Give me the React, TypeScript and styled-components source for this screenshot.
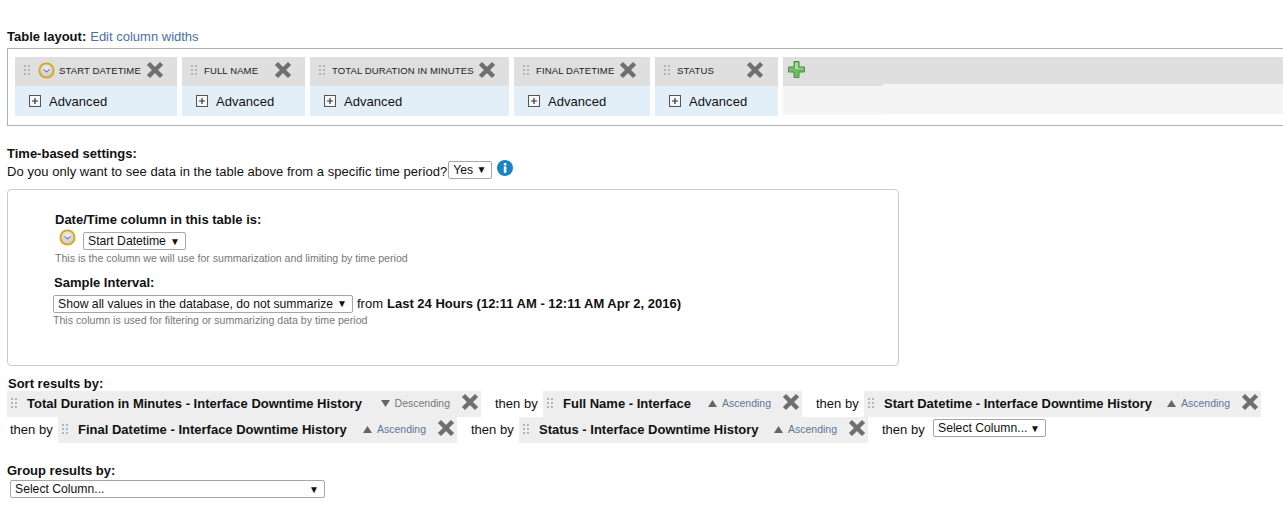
import React from 'react';
import styled, { createGlobalStyle } from 'styled-components';

const GlobalStyle = createGlobalStyle`
    html, body {
        margin: 0;
        padding: 0;
        background: #fff;
        overflow: hidden;
    }
    body {
        font-family: "Liberation Sans", Arial, sans-serif;
        font-size: 13px;
        color: #111;
    }
`

const Page = styled.div`
    width: 1283px;
    height: 511px;
    overflow: hidden;
    padding: 29px 0 0 7px;
    box-sizing: border-box;
`

const Heading = styled.div`
    font-size: 13px;
    font-weight: bold;
    line-height: 15px;
`

const EditLink = styled.a`
    font-weight: normal;
    color: #4a6f9f;
    margin-left: 4px;
`

// Table layout
const LayoutBox = styled.div`
    width: 1290px;
    height: 78px;
    margin-top: 4px;
    padding: 8px 0 0 7px;
    box-sizing: border-box;
    border: 1px solid #b0b0b0;
    display: flex;
    gap: 5px;
`

const ColumnCard = styled.div<{ $width: number }>`
    width: ${(props) => props.$width}px;
    flex: none;
    display: flex;
    flex-direction: column;
`

const ColumnHead = styled.div`
    height: 29px;
    box-sizing: border-box;
    background: #dfdfdf;
    display: flex;
    align-items: center;
    padding: 0 0 3px 9px;
    position: relative;
`

const ClockSlot = styled.span`
    display: flex;
    margin: 0 -3px 0 8px;
`

const ColumnName = styled.span`
    font-size: 9.5px;
    letter-spacing: 0.13px;
    color: #222;
    margin-left: 7px;
    white-space: nowrap;
`

const RemoveSlot = styled.span<{ $right: number }>`
    position: absolute;
    top: 4px;
    right: ${(props) => props.$right}px;
    display: flex;
`

const ColumnBody = styled.div`
    height: 30px;
    background: #e3eff8;
    display: flex;
    align-items: center;
    padding-left: 14px;
    gap: 8px;
    font-size: 13px;
    letter-spacing: 0.05px;
`

const AddColumn = styled.div`
    flex: 1;
    display: flex;
    flex-direction: column;
`

const AddHead = styled.div`
    height: 27px;
    background: #dfdfdf;
    padding: 4px 0 0 5px;
    box-sizing: border-box;
`

const AddFoot = styled.div`
    display: flex;
    height: 31px;
`

const AddFootLeft = styled.div`
    width: 100px;
    height: 31px;
    box-sizing: border-box;
    background: #f4f4f4;
    border-top: 2px solid #dfdfdf;
`

const AddFootRight = styled.div`
    flex: 1;
    height: 30px;
    background: #f4f4f4;
`

// Time-based settings
const TimeSection = styled.div`
    margin-top: 20px;
`

const Question = styled.div`
    font-size: 13px;
    letter-spacing: 0.05px;
    line-height: 18px;
    margin-top: 2px;
    display: flex;
    align-items: flex-start;
`

const QuestionSelect = styled.span`
    margin: -2px 0 0 1px;
    display: flex;
`

const FakeSelect = styled.span<{ $width: number }>`
    width: ${(props) => props.$width}px;
    height: 18px;
    flex: none;
    box-sizing: border-box;
    display: inline-flex;
    align-items: center;
    justify-content: space-between;
    padding: 0 5px 0 4px;
    background: #fff;
    border: 1px solid #a6a6a6;
    border-radius: 2px;
    font-size: 12.2px;
    letter-spacing: 0;
    color: #111;
    white-space: nowrap;
`

const Arrow = styled.span`
    font-size: 10px;
    color: #111;
`

const InfoSlot = styled.span`
    margin: -3px 0 0 5px;
    display: flex;
`

const Panel = styled.div`
    width: 892px;
    height: 177px;
    margin-top: 8px;
    box-sizing: border-box;
    border: 1px solid #ccc;
    border-radius: 4px;
    padding: 22px 0 0 46px;
`

const PanelLabel = styled.div`
    font-size: 13px;
    font-weight: bold;
    line-height: 15px;
    margin-left: 1px;
`

const DateRow = styled.div`
    display: flex;
    align-items: flex-start;
    gap: 7px;
    margin: 2px 0 0 5px;
    height: 20px;
`

const DateSelectSlot = styled.span`
    margin-top: 3px;
`

const Hint = styled.div`
    font-size: 10.6px;
    line-height: 12px;
    color: #777;
    margin-top: 3px;
    margin-left: 1px;
`

const IntervalLabel = styled(PanelLabel)`
    margin-top: 11px;
    margin-left: 0;
`

const IntervalRow = styled.div`
    display: flex;
    align-items: center;
    margin-top: 5px;
    font-size: 13px;
    line-height: 18px;
    margin-left: -1px;
`

const FromText = styled.span`
    margin-left: 4px;
`

const Range = styled.b`
    margin-left: 4px;
`

const IntervalHint = styled(Hint)`
    margin: 1px 0 0 -1px;
`

// Sort / group
const SortSection = styled.div`
    margin-top: 10px;
`

const SortHeading = styled(Heading)`
    margin-left: 1px;
`

const SortRow = styled.div`
    display: flex;
    align-items: center;
    height: 26px;
`

const SortChip = styled.div<{ $width: number }>`
    width: ${(props) => props.$width}px;
    height: 26px;
    flex: none;
    background: #eee;
    display: flex;
    align-items: center;
    padding: 0 0 2px 4px;
    box-sizing: border-box;
    position: relative;
`

const SortName = styled.b`
    margin-left: 10px;
    font-size: 13px;
    white-space: nowrap;
`

const SortDirection = styled.span<{ $accent?: boolean }>`
    margin-left: auto;
    margin-right: 31px;
    display: flex;
    align-items: center;
    gap: 5px;
    font-size: 10.5px;
    color: ${(props) => (props.$accent ? '#5d7797' : '#777')};
`

const SortRemove = styled.span`
    position: absolute;
    right: 2px;
    top: 2px;
    display: flex;
`

const ThenBy = styled.span<{ $left: number; $right: number }>`
    width: 42px;
    flex: none;
    margin: 0 ${(props) => props.$right}px 0 ${(props) => props.$left}px;
    padding-bottom: 1px;
    font-size: 13px;
    white-space: nowrap;
`

const SortSelectSlot = styled.span`
    display: flex;
    margin-bottom: 4px;
`

const GroupSection = styled.div`
    margin-top: 20px;
`

const GroupSelectSlot = styled.div`
    margin: 2px 0 0 3px;
`

const Grip = () => (
    <svg width="6" height="10" viewBox="0 0 6 10" fill="#b4b4b4">
        <rect x="0" y="0" width="2" height="2" />
        <rect x="4" y="0" width="2" height="2" />
        <rect x="0" y="4" width="2" height="2" />
        <rect x="4" y="4" width="2" height="2" />
        <rect x="0" y="8" width="2" height="2" />
        <rect x="4" y="8" width="2" height="2" />
    </svg>
)

const RemoveIcon = () => (
    <svg width="18" height="18" viewBox="0 0 18 18">
        <path d="M4 4 L14 14 M14 4 L4 14" stroke="#6f6f6f" strokeWidth="4.4" strokeLinecap="square" />
    </svg>
)

const ClockIcon = () => (
    <svg width="17" height="17" viewBox="0 0 17 17">
        <defs>
            <radialGradient id="clockFace" cx="50%" cy="35%" r="65%">
                <stop offset="0%" stopColor="#eeeef4" />
                <stop offset="100%" stopColor="#c6c6d0" />
            </radialGradient>
        </defs>
        <circle cx="8.5" cy="8.5" r="7.1" fill="url(#clockFace)" stroke="#dfa50f" strokeWidth="1.8" />
        <path d="M5.5 7.5 L8.5 10 L11.5 7.5" fill="none" stroke="#85858f" strokeWidth="1.1" />
    </svg>
)

const PlusBoxIcon = () => (
    <svg width="12" height="12" viewBox="0 0 12 12">
        <rect x="0.5" y="0.5" width="11" height="11" fill="#f4f6f8" stroke="#555" />
        <path d="M3 6 H9 M6 3 V9" stroke="#333" strokeWidth="1.2" />
    </svg>
)

const GreenPlusIcon = () => (
    <svg width="17" height="17" viewBox="0 0 17 17">
        <path d="M6 .5 H11 V6 H16.5 V11 H11 V16.5 H6 V11 H.5 V6 H6 Z" fill="#6fbf67" stroke="#4f8a4a" />
        <path d="M7 2 H10 V7 H15 V8 H7 Z" fill="#a5dc9f" />
    </svg>
)

const InfoIcon = () => (
    <svg width="16" height="16" viewBox="0 0 16 16">
        <circle cx="8" cy="8" r="8" fill="#1b82c4" />
        <rect x="6.8" y="3" width="2.6" height="2.4" fill="#fff" />
        <rect x="6.8" y="6.4" width="2.6" height="6.4" fill="#fff" />
    </svg>
)

const TriangleIcon = (props: { down?: boolean }) => (
    <svg width="9" height="7" viewBox="0 0 9 7" fill="#666">
        <path d={props.down ? 'M0 0 H9 L4.5 7 Z' : 'M0 7 H9 L4.5 0 Z'} />
    </svg>
)

const columns = [
    { name: 'START DATETIME', width: 162, clock: true, removeRight: 13 },
    { name: 'FULL NAME', width: 123, removeRight: 13 },
    { name: 'TOTAL DURATION IN MINUTES', width: 199, removeRight: 13 },
    { name: 'FINAL DATETIME', width: 136, removeRight: 13 },
    { name: 'STATUS', width: 123, removeRight: 14 },
]

const Select = (props: { width: number; label: string }) => (
    <FakeSelect $width={props.width}>
        {props.label}
        <Arrow>▼</Arrow>
    </FakeSelect>
)

const Chip = (props: { width: number; name: string; down?: boolean }) => (
    <SortChip $width={props.width}>
        <Grip />
        <SortName>{props.name}</SortName>
        <SortDirection $accent={!props.down}>
            <TriangleIcon down={props.down} />
            {props.down ? 'Descending' : 'Ascending'}
        </SortDirection>
        <SortRemove><RemoveIcon /></SortRemove>
    </SortChip>
)

export default function App() {
    return (
        <Page>
            <GlobalStyle />
            <Heading>Table layout:<EditLink>Edit column widths</EditLink></Heading>
            <LayoutBox>
                {columns.map((col) => (
                    <ColumnCard key={col.name} $width={col.width}>
                        <ColumnHead>
                            <Grip />
                            {col.clock && <ClockSlot><ClockIcon /></ClockSlot>}
                            <ColumnName>{col.name}</ColumnName>
                            <RemoveSlot $right={col.removeRight}><RemoveIcon /></RemoveSlot>
                        </ColumnHead>
                        <ColumnBody><PlusBoxIcon />Advanced</ColumnBody>
                    </ColumnCard>
                ))}
                <AddColumn>
                    <AddHead><GreenPlusIcon /></AddHead>
                    <AddFoot>
                        <AddFootLeft />
                        <AddFootRight />
                    </AddFoot>
                </AddColumn>
            </LayoutBox>

            <TimeSection>
                <Heading>Time-based settings:</Heading>
                <Question>
                    Do you only want to see data in the table above from a specific time period?
                    <QuestionSelect><Select width={44} label="Yes" /></QuestionSelect>
                    <InfoSlot><InfoIcon /></InfoSlot>
                </Question>
                <Panel>
                    <PanelLabel>Date/Time column in this table is:</PanelLabel>
                    <DateRow>
                        <ClockIcon />
                        <DateSelectSlot><Select width={103} label="Start Datetime" /></DateSelectSlot>
                    </DateRow>
                    <Hint>This is the column we will use for summarization and limiting by time period</Hint>
                    <IntervalLabel>Sample Interval:</IntervalLabel>
                    <IntervalRow>
                        <Select width={300} label="Show all values in the database, do not summarize" />
                        <FromText>from</FromText>
                        <Range>Last 24 Hours (12:11 AM - 12:11 AM Apr 2, 2016)</Range>
                    </IntervalRow>
                    <IntervalHint>This column is used for filtering or summarizing data by time period</IntervalHint>
                </Panel>
            </TimeSection>

            <SortSection>
                <SortHeading>Sort results by:</SortHeading>
                <SortRow>
                    <Chip width={474} name="Total Duration in Minutes - Interface Downtime History" down />
                    <ThenBy $left={14} $right={6}>then by</ThenBy>
                    <Chip width={259} name="Full Name - Interface" />
                    <ThenBy $left={14} $right={6}>then by</ThenBy>
                    <Chip width={397} name="Start Datetime - Interface Downtime History" />
                </SortRow>
                <SortRow>
                    <ThenBy $left={3} $right={6}>then by</ThenBy>
                    <Chip width={399} name="Final Datetime - Interface Downtime History" />
                    <ThenBy $left={14} $right={6}>then by</ThenBy>
                    <Chip width={349} name="Status - Interface Downtime History" />
                    <ThenBy $left={14} $right={9}>then by</ThenBy>
                    <SortSelectSlot><Select width={113} label="Select Column..." /></SortSelectSlot>
                </SortRow>
            </SortSection>

            <GroupSection>
                <Heading>Group results by:</Heading>
                <GroupSelectSlot><Select width={315} label="Select Column..." /></GroupSelectSlot>
            </GroupSection>
        </Page>
    )
}
